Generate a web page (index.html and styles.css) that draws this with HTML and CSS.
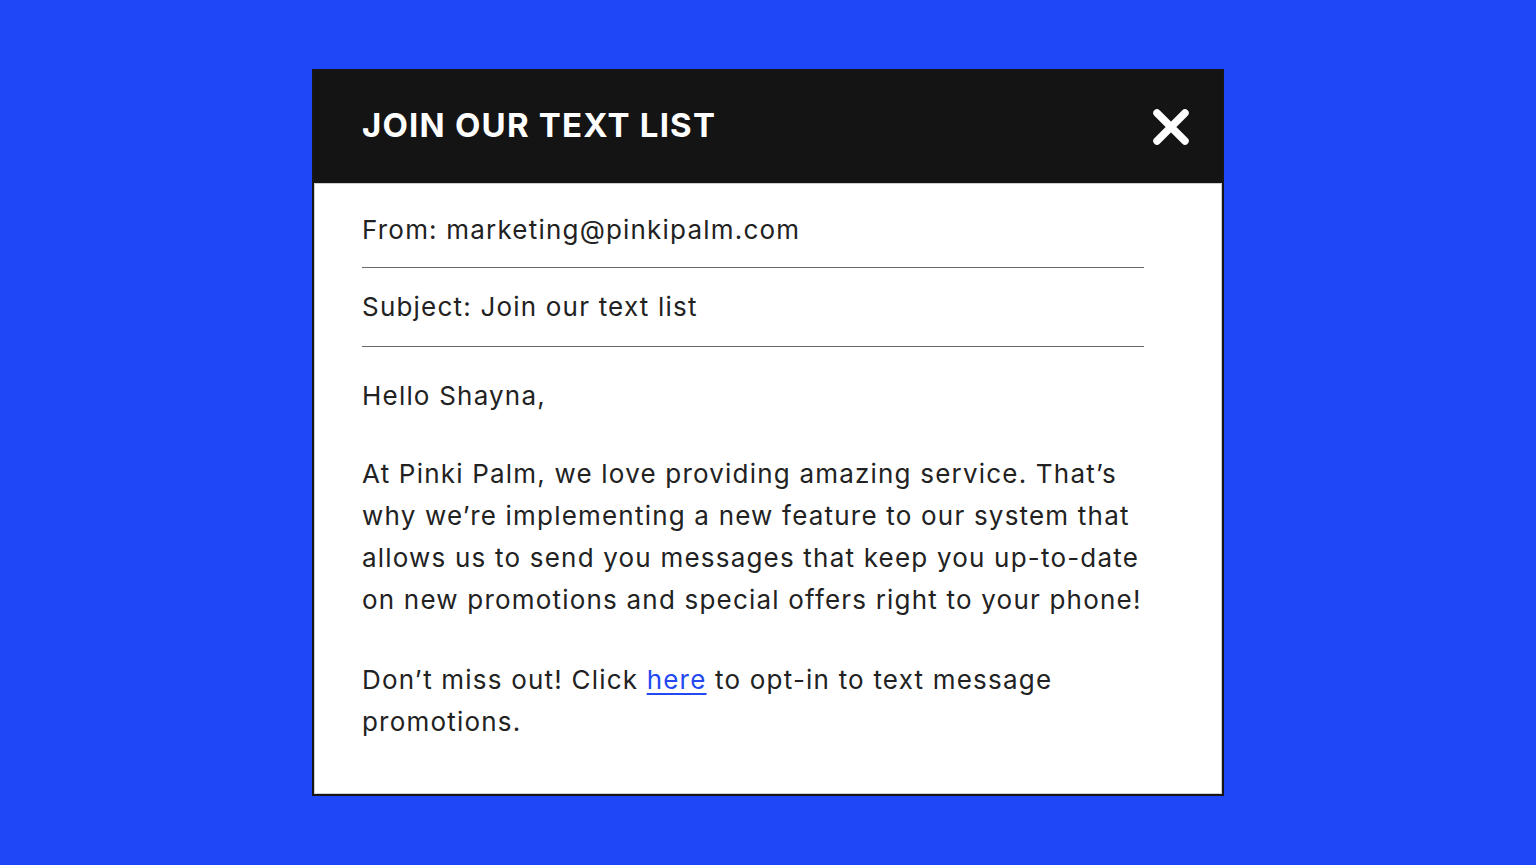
FILE: index.html
```html
<!DOCTYPE html>
<html lang="en">
<head>
<meta charset="utf-8">
<title>Join our text list</title>
<link rel="stylesheet" href="styles.css">
</head>
<body>
<div class="card">
  <div class="card-header">
    <h1 class="title">JOIN OUR TEXT LIST</h1>
    <button class="close" aria-label="Close">
      <svg width="40" height="40" viewBox="0 0 40 40"><path d="M6 6 L34 34 M34 6 L6 34" stroke="#fff" stroke-width="7.5" stroke-linecap="round" fill="none"/></svg>
    </button>
  </div>
  <div class="card-body">
    <div class="field">From: marketing@pinkipalm.com</div>
    <div class="field">Subject: Join our text list</div>
    <p class="greet">Hello Shayna,</p>
    <p class="para">At Pinki Palm, we love providing amazing service. That’s<br>why we’re implementing a new feature to our system that<br>allows us to send you messages that keep you up-to-date<br>on new promotions and special offers right to your phone!</p>
    <p class="para last">Don’t miss out! Click <a href="#" class="link">here</a> to opt-in to text message<br>promotions.</p>
  </div>
</div>
</body>
</html>
```
FILE: styles.css
```css
html, body {
  margin: 0;
  padding: 0;
}
body {
  background: #1f47f7;
  min-height: 100vh;
  display: flex;
  align-items: center;
  justify-content: center;
  font-family: Inter, "Liberation Sans", sans-serif;
}
.card {
  width: 908px;
  border: 2px solid #161616;
  background: #fff;
}
.card-header {
  background: #141414;
  height: 112px;
  box-sizing: border-box;
  display: flex;
  align-items: center;
  justify-content: space-between;
  padding: 0 31px 4px 48px;
}
.title {
  margin: 0;
  color: #fff;
  font-size: 33px;
  font-weight: 700;
  letter-spacing: 1.2px;
}
.close {
  background: none;
  border: 0;
  padding: 0;
  width: 40px;
  height: 40px;
  display: flex;
  margin-top: 4px;
}
.card-body {
  padding: 26px 78px 51px 48px;
  color: #222;
  font-size: 26px;
  line-height: 42px;
  letter-spacing: 1.2px;
  box-shadow: inset 0 0 0 1px #cfcfcf;
}
.field {
  padding-bottom: 16px;
  border-bottom: 1px solid #6a6a6a;
}
.field + .field {
  padding-top: 18px;
  padding-bottom: 18px;
}
.greet {
  margin: 28px 0 0;
}
.para {
  margin: 36px 0 0;
  white-space: nowrap;
}
.para.last {
  margin-top: 38px;
}
.link {
  color: #2349f2;
  text-decoration: underline;
  text-underline-offset: 4px;
  text-decoration-thickness: 1.5px;
}
```
